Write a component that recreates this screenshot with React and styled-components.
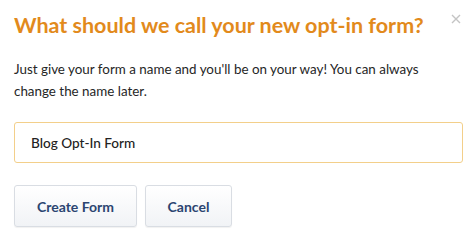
import React from "react";
import styled, { createGlobalStyle } from "styled-components";

const Global = createGlobalStyle`
  html, body { margin: 0; padding: 0; background: #ffffff; }
  body { font-family: Lato, "Open Sans", sans-serif; }
  * { box-sizing: border-box; }
`;

const Dialog = styled.div`
  position: relative;
  width: 474px;
  height: 240px;
  padding: 10px 11px 0 14px;
  background: #fff;
  overflow: hidden;
`;

const Title = styled.h2`
  margin: 0;
  font-family: Lato, sans-serif;
  font-weight: 700;
  font-size: 21.5px;
  line-height: 30px;
  color: #e28a1c;
  letter-spacing: 0;
  white-space: nowrap;
`;

const Close = styled.button`
  position: absolute;
  top: 12px;
  right: 11px;
  width: 14px;
  height: 14px;
  padding: 0;
  border: none;
  background: transparent;
  display: flex;
  align-items: center;
  justify-content: center;
  cursor: pointer;
`;

const Text = styled.p`
  margin: 18px 0 0;
  max-width: 432px;
  font-family: Lato, sans-serif;
  font-size: 13.4px;
  line-height: 22px;
  color: #262626;
`;

const Input = styled.input`
  display: block;
  margin-top: 20px;
  width: 449px;
  height: 41px;
  padding: 0 16px;
  border: 1px solid #f3cf8a;
  border-radius: 3px;
  font-family: Lato, sans-serif;
  font-size: 13.6px;
  font-weight: 500;
  color: #222;
  outline: none;
`;

const Actions = styled.div`
  display: flex;
  gap: 8px;
  margin-top: 22px;
`;

const Button = styled.button`
  height: 42px;
  width: ${p => p.$w}px;
  padding: 0;
  border: 1px solid #d9dde3;
  border-radius: 3px;
  background: linear-gradient(#ffffff, #f1f3f6);
  box-shadow: 0 1px 1px rgba(0,0,0,0.06);
  font-family: Lato, sans-serif;
  font-weight: 700;
  font-size: 14px;
  color: #2b4571;
  cursor: pointer;
`;

export default function App() {
  return (
    <>
      <Global />
      <Dialog>
        <Title>What should we call your new opt-in form?</Title>
        <Close aria-label="Close">
          <svg width="10" height="10" viewBox="0 0 10 10">
            <path d="M1 1L9 9M9 1L1 9" stroke="#c4c4c4" strokeWidth="1.4" />
          </svg>
        </Close>
        <Text>
          Just give your form a name and you'll be on your way! You can always
          change the name later.
        </Text>
        <Input defaultValue="Blog Opt-In Form" />
        <Actions>
          <Button $w={123}>Create Form</Button>
          <Button $w={87}>Cancel</Button>
        </Actions>
      </Dialog>
    </>
  );
}
